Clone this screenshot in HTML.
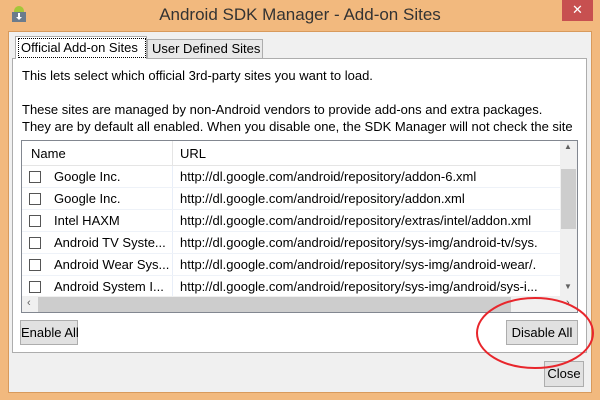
<!DOCTYPE html>
<html><head><style>
*{margin:0;padding:0;box-sizing:border-box}
body{width:600px;height:400px;overflow:hidden;background:#f2b97e;font-family:"Liberation Sans","Noto Sans CJK SC",sans-serif;font-size:13px;color:#000;position:relative}
.abs{position:absolute}
.client{left:8px;top:31px;width:584px;height:362px;background:#f0f0f0;border:1px solid #d89a5c}
.btn{position:absolute;background:#e1e1e1;border:1px solid #adadad;text-align:center;line-height:23px;white-space:nowrap}
.row{position:absolute;left:0;width:538px;height:22px;border-bottom:1px solid #eef2f8}
.cb{position:absolute;left:7px;top:5px;width:12px;height:12px;border:1px solid #555;background:#fff}
.nm{position:absolute;left:32px;top:3px;white-space:nowrap}
.url{position:absolute;left:158px;top:3px;white-space:nowrap;width:380px;overflow:hidden}
</style></head><body>
<div class="abs" style="left:12px;top:6px;width:14px;height:16px">
<div class="abs" style="left:2px;top:0;width:10px;height:6px;background:#a4c639;border-radius:5px 5px 0 0"></div>
<div class="abs" style="left:0;top:6px;width:14px;height:10px;background:#6b7b8c"></div>
<div class="abs" style="left:6px;top:7px;width:2px;height:5px;background:#fff"></div>
<div class="abs" style="left:4px;top:11px;width:0;height:0;border-left:3px solid transparent;border-right:3px solid transparent;border-top:3px solid #fff"></div>
</div>
<div class="abs" style="left:0;top:5px;width:600px;text-align:center;font-size:17px;color:#333">Android SDK Manager - Add-on Sites</div>
<div class="abs" style="left:562px;top:0;width:31px;height:21px;background:#c75050;color:#fff;text-align:center;line-height:20px;font-size:13px">✕</div>
<div class="abs client"></div>
<div class="abs" style="left:12px;top:58px;width:575px;height:295px;background:#fff;border:1px solid #adadad"></div>
<div class="abs" style="left:147px;top:39px;width:116px;height:20px;background:#e8e8e8;border:1px solid #adadad;line-height:18px;padding-left:4px;white-space:nowrap">User Defined Sites</div>
<div class="abs" style="left:15px;top:36px;width:132px;height:23px;background:#fff;border:1px solid #adadad;border-bottom:none"></div>
<div class="abs" style="left:18px;top:38px;width:128px;height:20px;border:1px dotted #000;line-height:18px;padding-left:2px;white-space:nowrap">Official Add-on Sites</div>
<div class="abs" style="left:22px;top:68px;white-space:nowrap">This lets select which official 3rd-party sites you want to load.</div>
<div class="abs" style="left:22px;top:102px;white-space:nowrap">These sites are managed by non-Android vendors to provide add-ons and extra packages.</div>
<div class="abs" style="left:22px;top:119px;white-space:nowrap">They are by default all enabled. When you disable one, the SDK Manager will not check the site</div>
<div class="abs" style="left:21px;top:140px;width:557px;height:173px;border:1px solid #828790;background:#fff;overflow:hidden">
 <div class="abs" style="left:0;top:0;width:538px;height:25px;border-bottom:1px solid #e5e5e5">
  <div class="abs" style="left:9px;top:5px">Name</div>
  <div class="abs" style="left:150px;top:0;width:1px;height:25px;background:#e5e5e5"></div>
  <div class="abs" style="left:158px;top:5px">URL</div>
 </div>
 <div class="abs" style="left:150px;top:25px;width:1px;height:130px;background:#e8eef8"></div>
 <div class="row" style="top:25px"><div class="cb"></div><div class="nm">Google Inc.</div><div class="url">http://dl.google.com/android/repository/addon-6.xml</div></div>
 <div class="row" style="top:47px"><div class="cb"></div><div class="nm">Google Inc.</div><div class="url">http://dl.google.com/android/repository/addon.xml</div></div>
 <div class="row" style="top:69px"><div class="cb"></div><div class="nm">Intel HAXM</div><div class="url">http://dl.google.com/android/repository/extras/intel/addon.xml</div></div>
 <div class="row" style="top:91px"><div class="cb"></div><div class="nm">Android TV Syste...</div><div class="url">http://dl.google.com/android/repository/sys-img/android-tv/sys.</div></div>
 <div class="row" style="top:113px"><div class="cb"></div><div class="nm">Android Wear Sys...</div><div class="url">http://dl.google.com/android/repository/sys-img/android-wear/.</div></div>
 <div class="row" style="top:135px;border:none"><div class="cb"></div><div class="nm">Android System I...</div><div class="url">http://dl.google.com/android/repository/sys-img/android/sys-i...</div></div>
 <div class="abs" style="left:538px;top:0;width:17px;height:155px;background:#f0f0f0"></div>
 <div class="abs" style="left:539px;top:28px;width:15px;height:60px;background:#cdcdcd"></div>
 <div class="abs" style="left:542px;top:1px;font-size:8px;color:#606060">▲</div>
 <div class="abs" style="left:542px;top:141px;font-size:8px;color:#606060">▼</div>
 <div class="abs" style="left:0;top:155px;width:555px;height:17px;background:#f0f0f0"></div>
 <div class="abs" style="left:16px;top:156px;width:473px;height:15px;background:#cdcdcd"></div>
 <div class="abs" style="left:5px;top:156px;font-size:11px;color:#606060">‹</div>
 <div class="abs" style="left:544px;top:156px;font-size:11px;color:#606060">›</div>
</div>
<div class="btn" style="left:20px;top:320px;width:58px;height:25px">Enable All</div>
<div class="btn" style="left:506px;top:320px;width:72px;height:25px">Disable All</div>
<div class="btn" style="left:544px;top:361px;width:40px;height:26px">Close</div>
<svg class="abs" style="left:0;top:0" width="600" height="400"><ellipse cx="535" cy="333" rx="58" ry="35" fill="none" stroke="#e8262c" stroke-width="2"/></svg>
</body></html>
